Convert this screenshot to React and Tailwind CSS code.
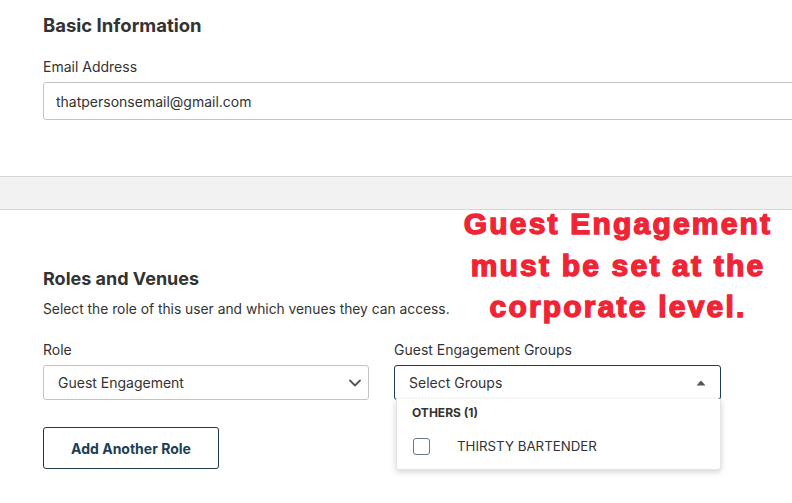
import React from "react";

export default function App() {
  return (
    <div className="relative w-[792px] h-[503px] overflow-hidden bg-white text-[#333] font-['Inter','Liberation_Sans',sans-serif]">
      {/* Basic information */}
      <section className="pl-[43px] pt-[13px] h-[176px]">
        <h2 className="text-[18.5px] leading-[24px] font-bold text-[#333]">Basic Information</h2>
        <label className="block mt-[20px] text-[14px] leading-[20px]">Email Address</label>
        <div className="mt-[5px] w-[800px] h-[38px] border border-[#c4c4c4] rounded-[3px] flex items-center pl-[12px] text-[14px]">
          thatpersonsemail@gmail.com
        </div>
      </section>

      {/* band */}
      <div className="h-[34px] bg-[#f2f2f2] border-y border-[#d6d6d6]" />

      {/* Roles and venues */}
      <section className="pl-[43px] pt-[57px]">
        <h2 className="text-[18px] leading-[24px] font-bold">Roles and Venues</h2>
        <p className="mt-[8px] text-[13.8px] leading-[20px]">Select the role of this user and which venues they can access.</p>
        <div className="mt-[21px] flex gap-[25px]">
          <div className="w-[326px]">
            <label className="block text-[14px] leading-[20px]">Role</label>
            <div className="mt-[5px] h-[35px] border border-[#c4c4c4] rounded-[3px] flex items-center justify-between pl-[14px] pr-[6px] text-[14px]">
              <span>Guest Engagement</span>
              <svg width="14" height="10" viewBox="0 0 14 10" fill="none">
                <path d="M2 2.5 L7 7.5 L12 2.5" stroke="#555" strokeWidth="1.8" strokeLinecap="round" strokeLinejoin="round" />
              </svg>
            </div>
            <button className="mt-[27px] w-[176px] h-[42px] border border-[#1e3a4a] rounded-[3px] text-[14px] font-bold text-[#1b3f55]">
              Add Another Role
            </button>
          </div>
          <div className="relative w-[327px]">
            <label className="block text-[14px] leading-[20px]">Guest Engagement Groups</label>
            <div className="mt-[5px] h-[35px] border border-[#1f3c4b] rounded-[3px] flex items-center justify-between pl-[14px] pr-[14px] text-[14px]">
              <span>Select Groups</span>
              <svg width="10" height="6" viewBox="0 0 10 6">
                <path d="M0.5 5.5 L5 0.5 L9.5 5.5 Z" fill="#555" />
              </svg>
            </div>
            <div className="absolute left-[2px] top-[59px] w-[325px] h-[71px] bg-white rounded-b-[3px] shadow-[0_2px_6px_rgba(0,0,0,0.18)] border-x border-b border-[#e6e6e6]">
              <div className="pl-[15px] pt-[6px] text-[12px] leading-[16px] font-bold text-[#333]">OTHERS (1)</div>
              <div className="mt-[15px] flex items-center pl-[16px]">
                <span className="w-[17px] h-[17px] border border-[#5f7d8a] rounded-[3px]" />
                <span className="ml-[27px] text-[13.3px] leading-[20px] text-[#333]">THIRSTY BARTENDER</span>
              </div>
            </div>
          </div>
        </div>
      </section>

      {/* annotation */}
      <div className="absolute left-[440px] top-[203px] w-[356px] text-center text-[30px] leading-[41.5px] font-black tracking-[2.2px] text-[#ef2536] font-['Liberation_Sans',Arial,sans-serif] [-webkit-text-stroke:1.4px_#ef2536]">
        <div>Guest Engagement</div>
        <div>must be set at the</div>
        <div>corporate level.</div>
      </div>
    </div>
  );
}
